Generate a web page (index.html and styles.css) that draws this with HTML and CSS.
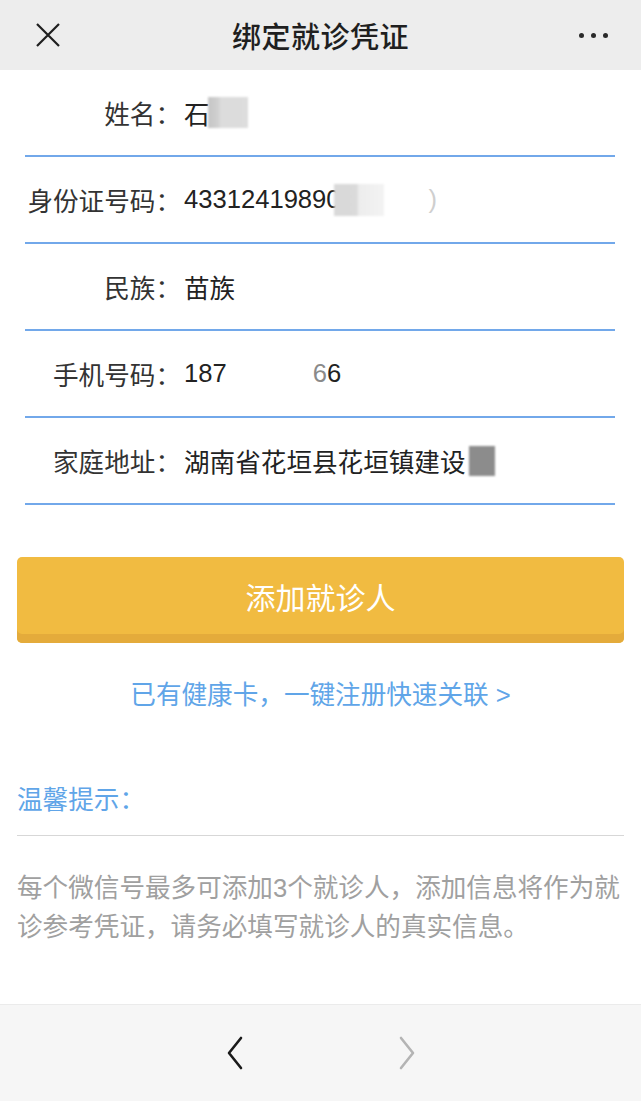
FILE: index.html
```html
<!DOCTYPE html>
<html lang="zh-CN">
<head>
<meta charset="utf-8">
<title>绑定就诊凭证</title>
<link rel="stylesheet" href="styles.css">
</head>
<body>
<div class="page">
  <header class="topbar">
    <div class="tb-left">
      <svg class="close" width="26" height="26" viewBox="0 0 26 26"><path d="M2 2 L24 24 M24 2 L2 24" stroke="#1f1f1f" stroke-width="2.2" fill="none"/></svg>
    </div>
    <div class="tb-title">绑定就诊凭证</div>
    <div class="tb-right">
      <span class="dot"></span><span class="dot"></span><span class="dot"></span>
    </div>
  </header>

  <main class="content">
    <section class="form">
      <div class="row">
        <span class="label">姓名：</span>
        <span class="value">石<span class="mask m1"></span></span>
      </div>
      <div class="row">
        <span class="label">身份证号码：</span>
        <span class="value">43312419890<span class="mask m2"></span><span class="gap g2"></span><span class="faint">)</span></span>
      </div>
      <div class="row">
        <span class="label">民族：</span>
        <span class="value">苗族</span>
      </div>
      <div class="row">
        <span class="label">手机号码：</span>
        <span class="value">187<span class="gap g4"></span><span class="half">6</span>6</span>
      </div>
      <div class="row">
        <span class="label">家庭地址：</span>
        <span class="value">湖南省花垣县花垣镇建设<span class="mask m5"></span></span>
      </div>
    </section>

    <button class="add-btn">添加就诊人</button>

    <div class="link">已有健康卡，一键注册快速关联 &gt;</div>

    <section class="tips">
      <div class="tips-title">温馨提示：</div>
      <p class="tips-text">每个微信号最多可添加3个就诊人，添加信息将作为就诊参考凭证，请务必填写就诊人的真实信息。</p>
    </section>
  </main>

  <footer class="bottombar">
    <svg class="chev" width="18" height="34" viewBox="0 0 18 34"><polyline points="15,2 3,17 15,32" fill="none" stroke="#1a1a1a" stroke-width="2.6" stroke-linecap="round" stroke-linejoin="round"/></svg>
    <svg class="chev" width="18" height="34" viewBox="0 0 18 34"><polyline points="3,2 15,17 3,32" fill="none" stroke="#b4b4b4" stroke-width="2.6" stroke-linecap="round" stroke-linejoin="round"/></svg>
  </footer>
</div>
</body>
</html>
```
FILE: styles.css
```css
* { box-sizing: border-box; }
html, body { margin: 0; padding: 0; }
body {
  background: #ffffff;
  font-family: "Liberation Sans", "Noto Sans CJK SC", sans-serif;
  color: #333;
}
.page {
  display: flex;
  flex-direction: column;
  height: 100vh;
}
.topbar {
  height: 70px;
  background: #ededed;
  display: grid;
  grid-template-columns: 1fr auto 1fr;
  align-items: center;
  flex-shrink: 0;
}
.tb-left { padding-left: 35px; display: flex; align-items: center; }
.close { display: block; }
.tb-title {
  font-size: 29px;
  font-weight: 500;
  color: #1f1f1f;
  letter-spacing: 0.5px;
}
.tb-right {
  display: flex;
  justify-content: flex-end;
  gap: 7px;
  padding-right: 33px;
}
.dot {
  width: 5px;
  height: 5px;
  border-radius: 50%;
  background: #2a2a2a;
}

.content { flex: 1; }

.form { padding: 0 26px 0 25px; }
.row {
  height: 87px;
  border-bottom: 2px solid #72a8ea;
  display: flex;
  align-items: center;
  font-size: 25.6px;
}
.label {
  width: 156px;
  text-align: right;
  color: #333;
  flex-shrink: 0;
}
.value {
  margin-left: 3px;
  color: #222;
  display: flex;
  align-items: center;
  white-space: nowrap;
}
.mask { display: inline-block; }
.m1 {
  width: 40px; height: 31px; margin-left: -2px;
  background: linear-gradient(90deg, #c6c6c6 0%, #d0d0d0 25%, #dcdcdc 32%, #dddddd 100%);
  filter: blur(1px);
}
.m2 {
  width: 50px; height: 32px; margin-left: -7px;
  background: linear-gradient(90deg, #d9d9d9 0%, #dadada 45%, #ededed 50%, #f3f3f3 100%);
  filter: blur(1.2px);
}
.m5 {
  width: 26px; height: 30px; margin-left: 3px;
  background: #8c8c8c;
  filter: blur(1px);
}
.gap { display: inline-block; }
.g2 { width: 45px; }
.g4 { width: 86px; }
.faint { color: #cfcfcf; }
.half { color: #8a8a8a; }

.add-btn {
  display: block;
  margin: 52px 17px 0 17px;
  width: calc(100% - 34px);
  height: 86px;
  border: none;
  border-radius: 5px;
  background: #f1bb41;
  box-shadow: inset 0 -9px 0 #e4ab3b;
  color: #ffffff;
  font-family: "Liberation Sans", "Noto Sans CJK SC", sans-serif;
  font-size: 30px;
  padding: 0 0 8px 0;
}

.link {
  margin-top: 32px;
  text-align: center;
  line-height: 40px;
  font-size: 25.6px;
  color: #60a5e8;
}

.tips { padding: 0 17px; margin-top: 65px; }
.tips-title {
  font-size: 25.6px;
  line-height: 40px;
  color: #60a5e8;
  padding-bottom: 15px;
  border-bottom: 1px solid #d7d7d7;
}
.tips-text {
  margin: 33px 0 0 0;
  font-size: 25.6px;
  line-height: 39px;
  color: #a0a0a0;
}

.bottombar {
  height: 97px;
  flex-shrink: 0;
  background: #f6f6f6;
  border-top: 1px solid #ebebeb;
  display: flex;
  justify-content: center;
  align-items: center;
  gap: 154px;
}
.chev { display: block; }
```
